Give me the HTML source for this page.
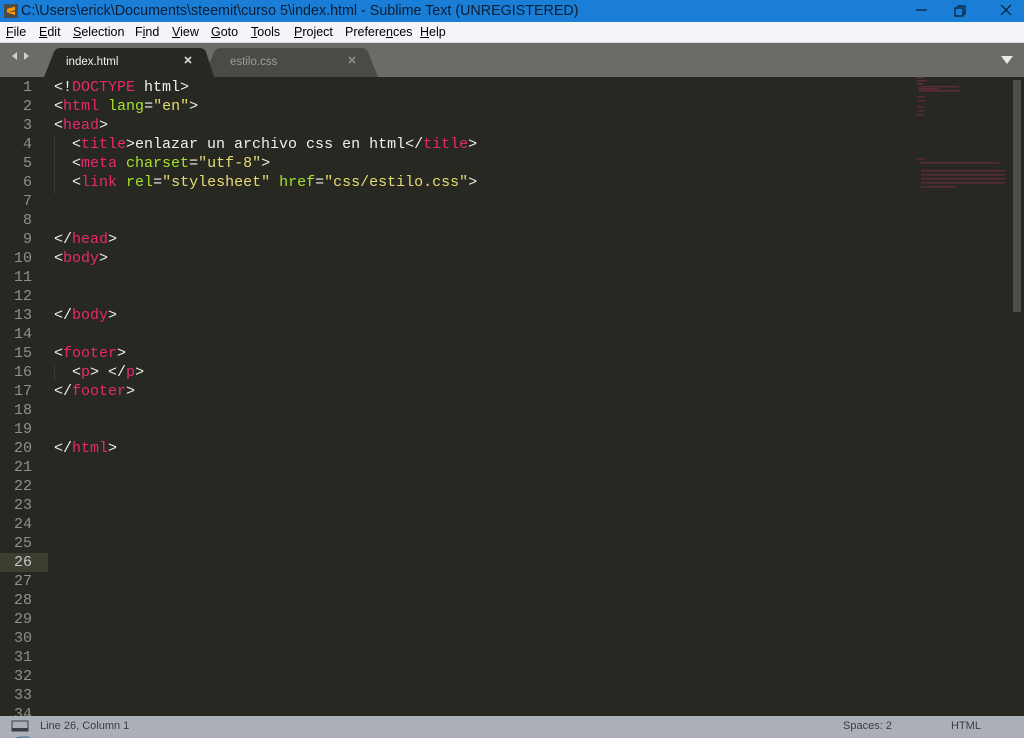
<!DOCTYPE html>
<html><head><meta charset="utf-8"><style>
*{margin:0;padding:0;box-sizing:border-box}
body{width:1024px;height:738px;overflow:hidden;background:#272822;font-family:"Liberation Sans",sans-serif;position:relative}
#title{position:absolute;left:0;top:0;width:1024px;height:22px;background:#1a7ed6;color:#0b1e33;font-size:14.3px;line-height:22px}
#title .t{position:absolute;left:21px;top:0}
#menu{position:absolute;left:0;top:22px;width:1024px;height:21px;background:#f3f5f8;border-bottom:1px solid #dcdcdc;font-size:12.5px;line-height:20px;color:#000}
#menu span{position:absolute;top:0}
#tabs{position:absolute;left:0;top:43px;width:1024px;height:34px;background:#6b6b68}
#code{position:absolute;left:0;top:78px;font-family:"Liberation Mono",monospace;font-size:15px;line-height:19px;color:#f0f0ea}
.ln{position:absolute;left:0;width:32px;text-align:right;color:#8f908a}
.cl{position:absolute;left:54px;white-space:pre}
.k{color:#e8286e}.a{color:#a6e22e}.s{color:#e6db74}
#status{position:absolute;left:0;top:716px;width:1024px;height:22px;background:#abb0b8;color:#3a3d42;font-size:11px;line-height:20px;overflow:hidden}
</style></head><body>
<div id="title">
<svg style="position:absolute;left:4px;top:4px" width="14" height="14"><rect width="14" height="14" fill="#4b4b4b"/><path d="M3 5 L11 2.5 L11 6 L3 8.5Z M3 8.5 L11 11 L11 7.5Z" fill="#ff9800"/></svg>
<span class="t">C:\Users\erick\Documents\steemit\curso 5\index.html - Sublime Text (UNREGISTERED)</span>
<svg style="position:absolute;left:910px;top:0" width="114" height="22" stroke="#0b1e33" fill="none" stroke-width="1.2"><path d="M6 10h11"/><path d="M47 6h8v8h-2M45 8h8v8h-8z"/><path d="M91 5l10 10M101 5l-10 10"/></svg>
</div>
<div id="menu">
<span style="left:6px"><u>F</u>ile</span><span style="left:39px"><u>E</u>dit</span><span style="left:73px"><u>S</u>election</span><span style="left:135px">F<u>i</u>nd</span><span style="left:172px"><u>V</u>iew</span><span style="left:211px"><u>G</u>oto</span><span style="left:251px"><u>T</u>ools</span><span style="left:294px"><u>P</u>roject</span><span style="left:345px">Prefere<u>n</u>ces</span><span style="left:420px"><u>H</u>elp</span>
</div>
<div id="tabs">
<svg width="1024" height="34" style="position:absolute;left:0;top:0">
<path d="M12 13l5-4v8z M24 9l5 4-5 4z" fill="#cfcfcf"/>
<path d="M222 5 L362 5 Q366 5 368 9 L378 34 L204 34 L214 9 Q216 5 222 5Z" fill="#4a4a46"/>
<path d="M60 5 L200 5 Q204 5 206 9 L214 34 L44 34 L54 9 Q56 5 60 5Z" fill="#272822"/>
<text x="66" y="22" font-family="Liberation Sans" font-size="11.5" fill="#f2f2f2">index.html</text>
<text x="230" y="22" font-family="Liberation Sans" font-size="11.5" fill="#9c9c98">estilo.css</text>
<path d="M185 14l6 6M191 14l-6 6" stroke="#d8d8d8" stroke-width="1.6"/>
<path d="M349 14l6 6M355 14l-6 6" stroke="#8a8a86" stroke-width="1.6"/>
<path d="M1001 13h12l-6 8z" fill="#e8e8e8"/>
</svg>
</div>
<div style="position:absolute;left:0;top:553px;width:48px;height:19px;background:#3e3d32"></div>
<div style="position:absolute;left:54px;top:136px;width:1px;height:57px;border-left:1px dotted #464741"></div>
<div style="position:absolute;left:54px;top:364px;width:1px;height:17px;border-left:1px dotted #464741"></div>
<div id="code">
<div class="ln" style="top:0">1</div><div class="ln" style="top:19px">2</div><div class="ln" style="top:38px">3</div><div class="ln" style="top:57px">4</div><div class="ln" style="top:76px">5</div><div class="ln" style="top:95px">6</div><div class="ln" style="top:114px">7</div><div class="ln" style="top:133px">8</div><div class="ln" style="top:152px">9</div><div class="ln" style="top:171px">10</div><div class="ln" style="top:190px">11</div><div class="ln" style="top:209px">12</div><div class="ln" style="top:228px">13</div><div class="ln" style="top:247px">14</div><div class="ln" style="top:266px">15</div><div class="ln" style="top:285px">16</div><div class="ln" style="top:304px">17</div><div class="ln" style="top:323px">18</div><div class="ln" style="top:342px">19</div><div class="ln" style="top:361px">20</div><div class="ln" style="top:380px">21</div><div class="ln" style="top:399px">22</div><div class="ln" style="top:418px">23</div><div class="ln" style="top:437px">24</div><div class="ln" style="top:456px">25</div><div class="ln" style="top:475px;color:#c8c8c2">26</div><div class="ln" style="top:494px">27</div><div class="ln" style="top:513px">28</div><div class="ln" style="top:532px">29</div><div class="ln" style="top:551px">30</div><div class="ln" style="top:570px">31</div><div class="ln" style="top:589px">32</div><div class="ln" style="top:608px">33</div><div class="ln" style="top:627px">34</div>
<div class="cl" style="top:0">&lt;!<span class="k">DOCTYPE</span> html&gt;</div>
<div class="cl" style="top:19px">&lt;<span class="k">html</span> <span class="a">lang</span>=<span class="s">"en"</span>&gt;</div>
<div class="cl" style="top:38px">&lt;<span class="k">head</span>&gt;</div>
<div class="cl" style="top:57px">  &lt;<span class="k">title</span>&gt;enlazar un archivo css en html&lt;/<span class="k">title</span>&gt;</div>
<div class="cl" style="top:76px">  &lt;<span class="k">meta</span> <span class="a">charset</span>=<span class="s">"utf-8"</span>&gt;</div>
<div class="cl" style="top:95px">  &lt;<span class="k">link</span> <span class="a">rel</span>=<span class="s">"stylesheet"</span> <span class="a">href</span>=<span class="s">"css/estilo.css"</span>&gt;</div>
<div class="cl" style="top:152px">&lt;/<span class="k">head</span>&gt;</div>
<div class="cl" style="top:171px">&lt;<span class="k">body</span>&gt;</div>
<div class="cl" style="top:228px">&lt;/<span class="k">body</span>&gt;</div>
<div class="cl" style="top:266px">&lt;<span class="k">footer</span>&gt;</div>
<div class="cl" style="top:285px">  &lt;<span class="k">p</span>&gt; &lt;/<span class="k">p</span>&gt;</div>
<div class="cl" style="top:304px">&lt;/<span class="k">footer</span>&gt;</div>
<div class="cl" style="top:361px">&lt;/<span class="k">html</span>&gt;</div>
</div>
<svg style="position:absolute;left:912px;top:76px" width="100" height="130">
<g fill="#5e2a3a"><rect x="5" y="1" width="8" height="1.5"/><rect x="5" y="4" width="10" height="1.5"/><rect x="5" y="7" width="6" height="1.5"/><rect x="7" y="10" width="40" height="1.5"/><rect x="7" y="12" width="20" height="1.5"/><rect x="7" y="14" width="42" height="1.5"/><rect x="5" y="20" width="8" height="1.5"/><rect x="5" y="24" width="8" height="1.5"/><rect x="5" y="30" width="6" height="1.5"/><rect x="6" y="34" width="6" height="1.5"/><rect x="5" y="38" width="6" height="1.5"/>
<rect x="5" y="82" width="8" height="1.5"/><rect x="7" y="86" width="80" height="1.5"/><rect x="9" y="94" width="84" height="1.5"/><rect x="9" y="98" width="84" height="1.5"/><rect x="9" y="102" width="84" height="1.5"/><rect x="9" y="106" width="84" height="1.5"/><rect x="9" y="110" width="35" height="1.5"/></g>
</svg>
<div style="position:absolute;left:1013px;top:80px;width:8px;height:232px;background:#4d4d49"></div>
<div id="status">
<svg style="position:absolute;left:11px;top:4px" width="18" height="20"><rect x="1" y="1" width="16" height="10" fill="none" stroke="#3a3d42"/><rect x="1" y="8" width="16" height="3" fill="#3a3d42"/><ellipse cx="14" cy="22" rx="14" ry="5" fill="#cdd3da" stroke="#2d5d88"/></svg>
<span style="position:absolute;left:40px;top:0">Line 26, Column 1</span>
<span style="position:absolute;left:843px;top:0">Spaces: 2</span>
<span style="position:absolute;left:951px;top:0">HTML</span>
</div>
</body></html>
